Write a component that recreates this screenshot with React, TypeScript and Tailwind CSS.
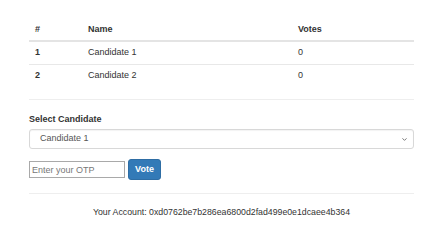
import { ChevronDown } from 'lucide-react';

const candidates = [
  { id: 1, name: 'Candidate 1', votes: 0 },
  { id: 2, name: 'Candidate 2', votes: 0 },
];

export default function App() {
  return (
    <div className="min-h-[237px] bg-white font-['Liberation_Sans',Arial,sans-serif] text-[9px] text-[#333]">
      <div className="mx-[29px] w-[385px] pt-[19px]">
        {/* results table */}
        <div className="grid grid-cols-[53px_210px_1fr] font-bold">
          <div className="flex h-[23px] items-center border-b-2 border-[#e4e4e4] pl-[6px]">#</div>
          <div className="flex h-[23px] items-center border-b-2 border-[#e4e4e4] pl-[6px]">Name</div>
          <div className="flex h-[23px] items-center border-b-2 border-[#e4e4e4] pl-[6px]">Votes</div>
        </div>
        {candidates.map((c, i) => (
          <div
            key={c.id}
            className={`grid h-[22px] grid-cols-[53px_210px_1fr] items-center ${
              i > 0 ? 'border-t border-[#e8e8e8]' : ''
            }`}
          >
            <div className="pl-[6px] font-bold">{c.id}</div>
            <div className="pl-[6px]">{c.name}</div>
            <div className="pl-[6px]">{c.votes}</div>
          </div>
        ))}

        <hr className="mt-[13px] border-[#eeeeee]" />

        {/* vote form */}
        <div className="mt-[14px] font-bold leading-[11px]">Select Candidate</div>
        <div className="relative mt-[4px] h-[20px] rounded-[3px] border border-[#d8d8d8] shadow-[inset_0_1px_1px_rgba(0,0,0,0.05)]">
          <div className="flex h-full items-center pl-[10px] text-[#555]">Candidate 1</div>
          <ChevronDown className="absolute right-[5px] top-[6px] h-[7px] w-[7px] text-[#666]" strokeWidth={3} />
        </div>

        <div className="mt-[10px] flex items-center gap-[3px]">
          <input
            placeholder="Enter your OTP"
            className="h-[17px] w-[96px] border border-[#a9a9a9] px-[2px] text-[9px] text-[#333] outline-none placeholder:text-[#777]"
          />
          <button className="h-[21px] w-[33px] rounded-[3px] border border-[#2e6da4] bg-[#337ab7] text-[9px] font-bold text-white">
            Vote
          </button>
        </div>

        <hr className="mt-[13px] border-[#eeeeee]" />

        <div className="mt-[13px] text-center text-[8.75px] leading-[11px]">
          Your Account: 0xd0762be7b286ea6800d2fad499e0e1dcaee4b364
        </div>
      </div>
    </div>
  );
}
